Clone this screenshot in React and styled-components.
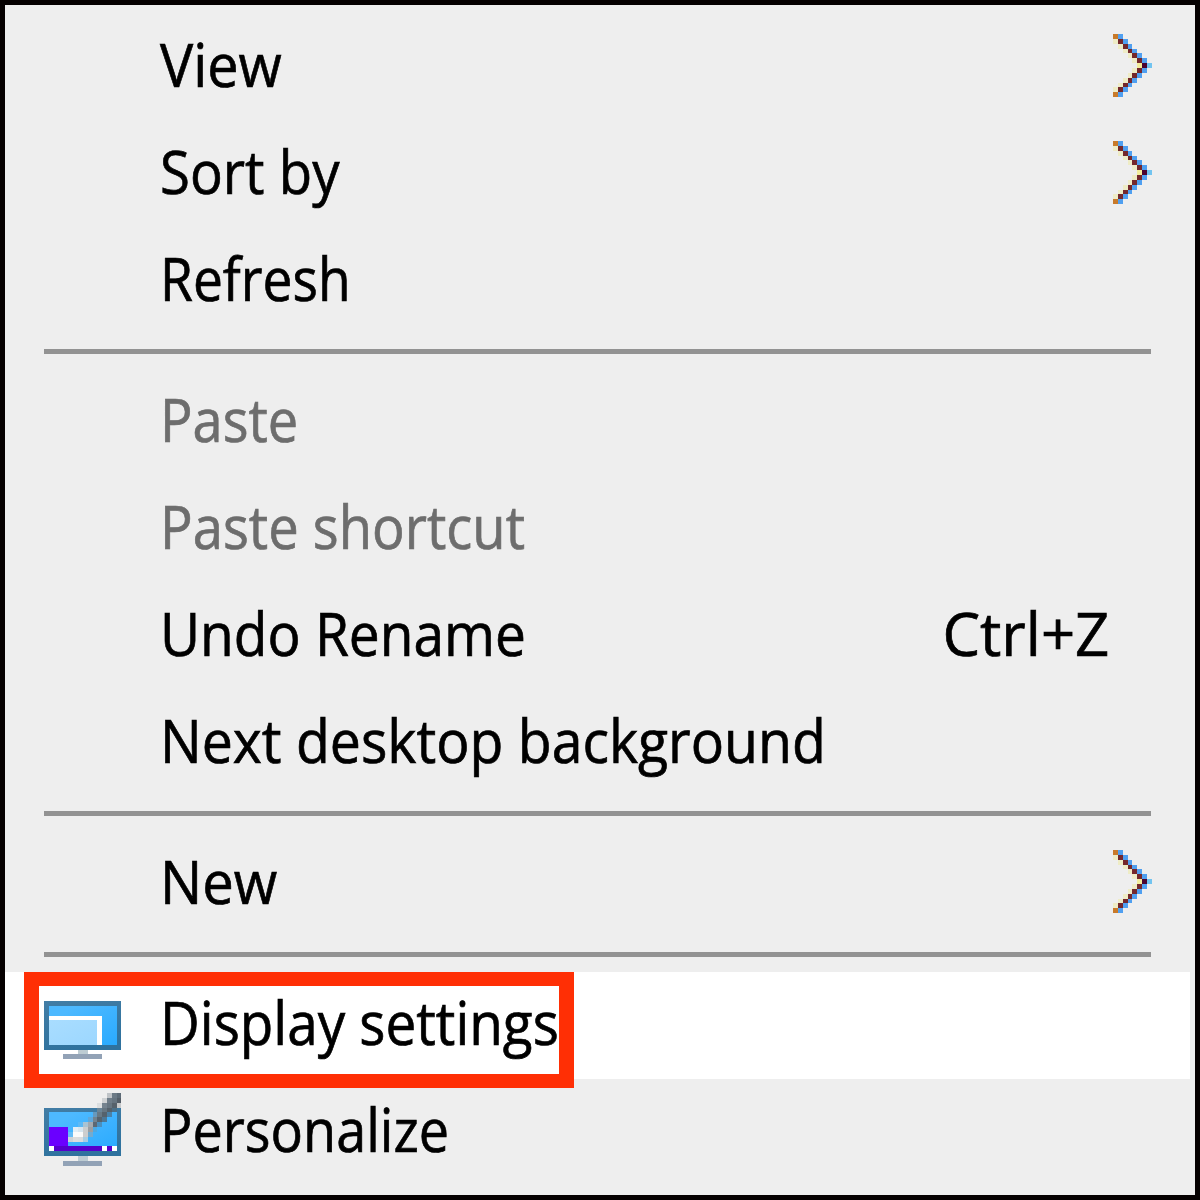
import React from 'react';
import styled, { createGlobalStyle } from 'styled-components';

const GlobalStyle = createGlobalStyle`
  html, body { margin: 0; background: #000; }
  * { box-sizing: border-box; }
`;

const Menu = styled.nav`
  display: flex;
  flex-direction: column;
  width: 1200px;
  height: 1200px;
  padding-top: 9.2px;
  border: 5px solid #050000;
  background: #eee;
  overflow: hidden;
  font-family: "Open Sans", "Noto Sans", sans-serif;
  font-size: 61px;
`;

const Item = styled.div`
  position: relative;
  flex: none;
  display: grid;
  grid-template-columns: 116px 1fr auto;
  align-items: start;
  width: 1185px;
  height: 106.96px;
  padding: 0 38.3px 0 38.6px;
  color: ${(p) => (p.$disabled ? '#6d6d6d' : '#000')};
  background: ${(p) => (p.$selected ? '#fff' : 'transparent')};
`;

const Text = styled.span`
  justify-self: start;
  line-height: 100px;
  white-space: nowrap;
  -webkit-text-stroke: 0.7px currentColor;
  transform: scaleX(${(p) => p.$condense});
  transform-origin: left center;
`;

const Shortcut = styled(Text)`
  margin-right: 42px;
  transform-origin: right center;
`;

const IconSlot = styled.span`
  padding-top: ${(p) => p.$top}px;
  line-height: 0;
`;

const ArrowSlot = styled.span`
  padding-top: 19.4px;
  line-height: 0;
`;

const Divider = styled.hr`
  flex: none;
  width: 1107.5px;
  height: 4.8px;
  margin: 14.3px 0 14.93px 38.6px;
  border: 0;
  background: #929292;
`;

const Highlight = styled.span`
  position: absolute;
  z-index: 1;
  top: 0;
  left: 19px;
  width: 550px;
  height: 116px;
  border: solid #ff2f05;
  border-width: 14px 15px;
`;

/* one unit of every view box is one cell of the pixel grid */
const CELL = 4.862;

function Pixels({ cells }) {
  return cells.map(([x, y, w, h, fill], i) => (
    <rect key={i} x={x} y={y} width={w} height={h} fill={fill} />
  ));
}

const arrowCells = [];
for (let row = 0; row < 13; row += 1) {
  const col = row <= 6 ? row : 12 - row;
  if (col === 0) {
    arrowCells.push([0, row, 1, 1, '#c87a2a'], [1, row, 1, 1, '#4f9ff0']);
  } else if (col === 6) {
    arrowCells.push([5, row, 1, 1, '#f2ee9c'], [6, row, 1, 1, '#4a0430'], [7, row, 1, 1, '#72c4f0']);
  } else {
    arrowCells.push(
      [col - 1, row, 1, 1, '#eeecc6'],
      [col, row, 1, 1, '#74282c'],
      [col + 1, row, 1, 1, '#4f9ff0'],
    );
  }
}

function Arrow() {
  return (
    <svg width={8 * CELL} height={13 * CELL} viewBox="0 0 8 13" shapeRendering="crispEdges">
      <Pixels cells={arrowCells} />
    </svg>
  );
}

function Monitor({ id }) {
  return (
    <>
      <defs>
        <linearGradient id={`${id}-frame`} x1="0" y1="0" x2="0.3" y2="1">
          <stop offset="0" stopColor="#427da5" />
          <stop offset="1" stopColor="#2f729e" />
        </linearGradient>
        <linearGradient id={`${id}-screen`} x1="0" y1="0" x2="1" y2="1">
          <stop offset="0.2" stopColor="#4db9ff" />
          <stop offset="1" stopColor="#29aaff" />
        </linearGradient>
      </defs>
      <rect width="16" height="10" fill={`url(#${id}-frame)`} />
      <rect x="1" y="1" width="14" height="8" fill={`url(#${id}-screen)`} />
      <rect x="7" y="10" width="2" height="1" fill="#bdccd3" />
      <rect x="4" y="11" width="8" height="1" fill="#92a2b6" />
    </>
  );
}

function DisplayIcon() {
  return (
    <svg width={16 * CELL} height={12 * CELL} viewBox="0 0 16 12" shapeRendering="crispEdges">
      <defs>
        <linearGradient id="window" x1="0" y1="0" x2="1" y2="1">
          <stop offset="0" stopColor="#a9ddff" />
          <stop offset="1" stopColor="#9cd7ff" />
        </linearGradient>
      </defs>
      <Monitor id="display" />
      <rect x="1" y="3" width="11" height="6" fill="#fff" />
      <rect x="1" y="4" width="10" height="5" fill="url(#window)" />
    </svg>
  );
}

const wallpaperCells = [
  [1, 4, 4, 4, '#6a00ff'],
  [1, 8, 1, 1, '#fff'],
  [2, 8, 10, 1, '#5600cc'],
  [12, 8, 1, 1, '#fff'],
  [13, 8, 1, 1, '#5600cc'],
  [14, 8, 1, 1, '#fff'],
];

const brushCells = [
  [13, -3, 1, 1, '#bfc3c7'], [14, -3, 1, 1, '#6b7985'], [15, -3, 1, 1, '#5c6a76'],
  [12, -2, 1, 1, '#cfd2d4'], [13, -2, 1, 1, '#6f7d89'], [14, -2, 1, 1, '#667480'], [15, -2, 1, 1, '#535d67'],
  [11, -1, 1, 1, '#dcdfe1'], [12, -1, 1, 1, '#75838f'], [13, -1, 1, 1, '#667581'], [14, -1, 1, 1, '#56616b'], [15, -1, 1, 1, '#c6c8ca'],
  [11, 0, 1, 1, '#6a8598'], [12, 0, 1, 1, '#667682'], [13, 0, 1, 1, '#55616b'], [14, 0, 1, 1, '#4b6f87'],
  [10, 1, 1, 1, '#6799bd'], [11, 1, 1, 1, '#687985'], [12, 1, 1, 1, '#55626d'], [13, 1, 1, 1, '#4b82a8'],
  [9, 2, 1, 1, '#60a7d9'], [10, 2, 1, 1, '#718390'], [11, 2, 1, 1, '#56636e'], [12, 2, 1, 1, '#4d7795'],
  [7, 3, 1, 1, '#5cb9f5'], [8, 3, 1, 1, '#a9c3d3'], [9, 3, 1, 1, '#a3aab0'], [10, 3, 1, 1, '#5c6874'], [11, 3, 1, 1, '#4a8fbe'],
  [6, 4, 1, 1, '#e2eef6'], [7, 4, 1, 1, '#d7e6f0'], [8, 4, 1, 1, '#cccecf'], [9, 4, 1, 1, '#9b9fa3'], [10, 4, 1, 1, '#4da9e2'],
  [5, 5, 1, 1, '#65bdf6'], [6, 5, 2, 1, '#fbfbfb'], [8, 5, 1, 1, '#cecece'], [9, 5, 1, 1, '#72abd0'],
  [5, 6, 1, 1, '#ccd3d8'], [6, 6, 1, 1, '#dddddd'], [7, 6, 1, 1, '#d9dcde'], [8, 6, 1, 1, '#a9cde2'],
];

function PersonalizeIcon() {
  return (
    <svg width={16 * CELL} height={15 * CELL} viewBox="0 -3 16 15" shapeRendering="crispEdges">
      <Monitor id="personalize" />
      <Pixels cells={wallpaperCells} />
      <Pixels cells={brushCells} />
    </svg>
  );
}

function MenuItem({ label, condense, icon, iconTop, shortcut, submenu, disabled, selected }) {
  return (
    <Item $disabled={disabled} $selected={selected}>
      <IconSlot $top={iconTop || 0}>{icon}</IconSlot>
      <Text $condense={condense}>{label}</Text>
      {shortcut && <Shortcut $condense={0.98}>{shortcut}</Shortcut>}
      {submenu && <ArrowSlot><Arrow /></ArrowSlot>}
      {selected && <Highlight />}
    </Item>
  );
}

export default function App() {
  return (
    <>
      <GlobalStyle />
      <Menu>
        <MenuItem label="View" condense={0.914} submenu />
        <MenuItem label="Sort by" condense={0.895} submenu />
        <MenuItem label="Refresh" condense={0.874} />
        <Divider />
        <MenuItem label="Paste" condense={0.888} disabled />
        <MenuItem label="Paste shortcut" condense={0.891} disabled />
        <MenuItem label="Undo Rename" condense={0.902} shortcut="Ctrl+Z" />
        <MenuItem label="Next desktop background" condense={0.908} />
        <Divider />
        <MenuItem label="New" condense={0.92} submenu />
        <Divider />
        <MenuItem label="Display settings" condense={0.899} icon={<DisplayIcon />} iconTop={28.8} selected />
        <MenuItem label="Personalize" condense={0.885} icon={<PersonalizeIcon />} iconTop={14.2} />
      </Menu>
    </>
  );
}
